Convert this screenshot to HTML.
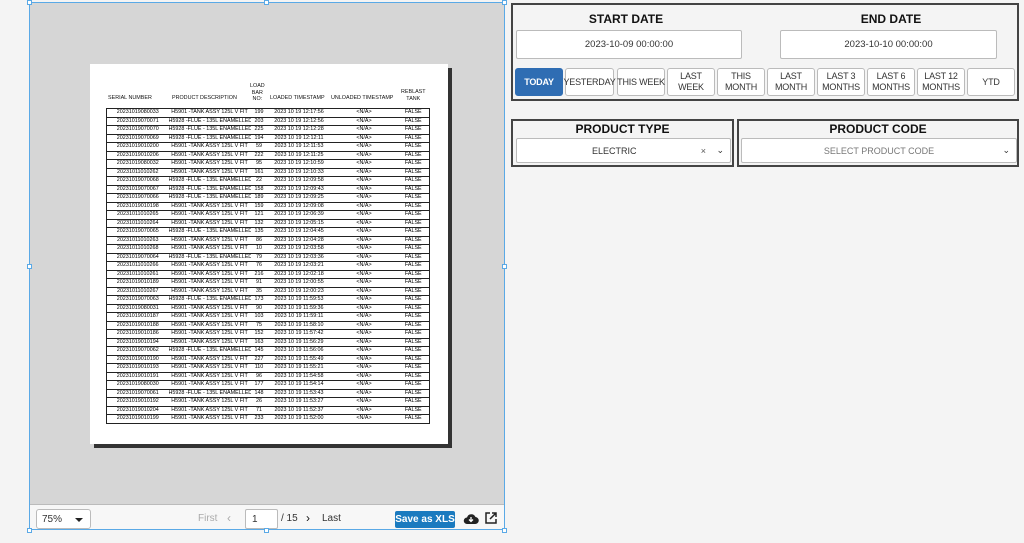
<!DOCTYPE html>
<html><head><meta charset="utf-8"><style>
*{box-sizing:border-box;margin:0;padding:0}
body{width:1024px;height:543px;background:#f4f4f4;font-family:"Liberation Sans",sans-serif;position:relative;overflow:hidden}
.viewer{position:absolute;left:29px;top:2px;width:476px;height:528px;border:1px solid #5aa9e6;background:#f7f7f7}
.gray{position:absolute;left:0;top:0;width:474px;height:502px;background:#d6d6d6;border-bottom:1px solid #bbb}
.page{position:absolute;left:60px;top:61px;width:358px;height:380px;background:#fff;box-shadow:4px 4px 0 #333}
.h{position:absolute;font-size:5.4px;color:#111;text-align:center;line-height:6.5px}
table{position:absolute;left:16px;top:44px;width:323px;border-collapse:collapse;font-size:5.4px;color:#000;table-layout:fixed}
td{border:0.8px solid #222;height:8.5px;line-height:7px;padding:0;white-space:nowrap;overflow:hidden;text-align:center;border-left:none;border-right:none}
tr td:first-child{border-left:0.8px solid #222}
tr td:last-child{border-right:0.8px solid #222}
.hd{position:absolute;width:5px;height:5px;border:1px solid #5aa9e6;background:#fff}
.tb{position:absolute;top:503px;left:0;width:474px;height:24px;font-size:10px;color:#333}
.box{position:absolute;border:2px solid #444;background:#f4f4f4}
.lbl{position:absolute;font-weight:bold;font-size:12px;color:#111;text-align:center}
.inp{position:absolute;background:#fff;border:1px solid #bbb;font-size:9.5px;color:#333;text-align:center;border-radius:2px}
.btn{position:absolute;top:68px;height:28px;width:48px;border:1px solid #bbb;border-radius:3px;background:#fff;font-size:9px;color:#333;text-align:center;display:flex;align-items:center;justify-content:center;line-height:11px;white-space:nowrap;letter-spacing:-0.2px}
</style></head><body>
<div class="viewer">
 <div class="gray">
  <div class="page">
   <div class="h" style="left:18px;top:31px">SERIAL NUMBER</div>
   <div class="h" style="left:82px;top:31px">PRODUCT DESCRIPTION</div>
   <div class="h" style="left:160px;top:19px">LOAD<br>BAR<br>NO:</div>
   <div class="h" style="left:180px;top:31px">LOADED TIMESTAMP</div>
   <div class="h" style="left:241px;top:31px">UNLOADED TIMESTAMP</div>
   <div class="h" style="left:311px;top:25px">REBLAST<br>TANK</div>
   <table>
<colgroup><col style="width:62px"><col style="width:82px"><col style="width:17px"><col style="width:63px"><col style="width:67px"><col style="width:32px"></colgroup>
<tr><td>20231019080033</td><td>H5901 -TANK ASSY 125L V FIT</td><td>199</td><td>2023 10 19 12:17:56</td><td>&lt;N/A&gt;</td><td>FALSE</td></tr>
<tr><td>20231019070071</td><td>H5928 -FLUE - 135L ENAMELLED</td><td>203</td><td>2023 10 19 12:12:56</td><td>&lt;N/A&gt;</td><td>FALSE</td></tr>
<tr><td>20231019070070</td><td>H5928 -FLUE - 135L ENAMELLED</td><td>225</td><td>2023 10 19 12:12:28</td><td>&lt;N/A&gt;</td><td>FALSE</td></tr>
<tr><td>20231019070069</td><td>H5928 -FLUE - 135L ENAMELLED</td><td>194</td><td>2023 10 19 12:12:11</td><td>&lt;N/A&gt;</td><td>FALSE</td></tr>
<tr><td>20231019010200</td><td>H5901 -TANK ASSY 125L V FIT</td><td>59</td><td>2023 10 19 12:11:53</td><td>&lt;N/A&gt;</td><td>FALSE</td></tr>
<tr><td>20231019010206</td><td>H5901 -TANK ASSY 125L V FIT</td><td>222</td><td>2023 10 19 12:11:25</td><td>&lt;N/A&gt;</td><td>FALSE</td></tr>
<tr><td>20231019080032</td><td>H5901 -TANK ASSY 125L V FIT</td><td>95</td><td>2023 10 19 12:10:59</td><td>&lt;N/A&gt;</td><td>FALSE</td></tr>
<tr><td>20231011010262</td><td>H5901 -TANK ASSY 125L V FIT</td><td>161</td><td>2023 10 19 12:10:33</td><td>&lt;N/A&gt;</td><td>FALSE</td></tr>
<tr><td>20231019070068</td><td>H5928 -FLUE - 135L ENAMELLED</td><td>22</td><td>2023 10 19 12:09:58</td><td>&lt;N/A&gt;</td><td>FALSE</td></tr>
<tr><td>20231019070067</td><td>H5928 -FLUE - 135L ENAMELLED</td><td>158</td><td>2023 10 19 12:09:43</td><td>&lt;N/A&gt;</td><td>FALSE</td></tr>
<tr><td>20231019070066</td><td>H5928 -FLUE - 135L ENAMELLED</td><td>189</td><td>2023 10 19 12:09:25</td><td>&lt;N/A&gt;</td><td>FALSE</td></tr>
<tr><td>20231019010198</td><td>H5901 -TANK ASSY 125L V FIT</td><td>159</td><td>2023 10 19 12:09:08</td><td>&lt;N/A&gt;</td><td>FALSE</td></tr>
<tr><td>20231011010265</td><td>H5901 -TANK ASSY 125L V FIT</td><td>121</td><td>2023 10 19 12:06:39</td><td>&lt;N/A&gt;</td><td>FALSE</td></tr>
<tr><td>20231011010264</td><td>H5901 -TANK ASSY 125L V FIT</td><td>132</td><td>2023 10 19 12:05:15</td><td>&lt;N/A&gt;</td><td>FALSE</td></tr>
<tr><td>20231019070065</td><td>H5928 -FLUE - 135L ENAMELLED</td><td>135</td><td>2023 10 19 12:04:45</td><td>&lt;N/A&gt;</td><td>FALSE</td></tr>
<tr><td>20231011010263</td><td>H5901 -TANK ASSY 125L V FIT</td><td>86</td><td>2023 10 19 12:04:28</td><td>&lt;N/A&gt;</td><td>FALSE</td></tr>
<tr><td>20231011010268</td><td>H5901 -TANK ASSY 125L V FIT</td><td>10</td><td>2023 10 19 12:03:58</td><td>&lt;N/A&gt;</td><td>FALSE</td></tr>
<tr><td>20231019070064</td><td>H5928 -FLUE - 135L ENAMELLED</td><td>79</td><td>2023 10 19 12:03:36</td><td>&lt;N/A&gt;</td><td>FALSE</td></tr>
<tr><td>20231011010266</td><td>H5901 -TANK ASSY 125L V FIT</td><td>76</td><td>2023 10 19 12:03:21</td><td>&lt;N/A&gt;</td><td>FALSE</td></tr>
<tr><td>20231011010261</td><td>H5901 -TANK ASSY 125L V FIT</td><td>216</td><td>2023 10 19 12:02:18</td><td>&lt;N/A&gt;</td><td>FALSE</td></tr>
<tr><td>20231019010189</td><td>H5901 -TANK ASSY 125L V FIT</td><td>91</td><td>2023 10 19 12:00:55</td><td>&lt;N/A&gt;</td><td>FALSE</td></tr>
<tr><td>20231011010267</td><td>H5901 -TANK ASSY 125L V FIT</td><td>35</td><td>2023 10 19 12:00:23</td><td>&lt;N/A&gt;</td><td>FALSE</td></tr>
<tr><td>20231019070063</td><td>H5928 -FLUE - 135L ENAMELLED</td><td>173</td><td>2023 10 19 11:59:53</td><td>&lt;N/A&gt;</td><td>FALSE</td></tr>
<tr><td>20231019080031</td><td>H5901 -TANK ASSY 125L V FIT</td><td>90</td><td>2023 10 19 11:59:36</td><td>&lt;N/A&gt;</td><td>FALSE</td></tr>
<tr><td>20231019010187</td><td>H5901 -TANK ASSY 125L V FIT</td><td>103</td><td>2023 10 19 11:59:11</td><td>&lt;N/A&gt;</td><td>FALSE</td></tr>
<tr><td>20231019010188</td><td>H5901 -TANK ASSY 125L V FIT</td><td>75</td><td>2023 10 19 11:58:10</td><td>&lt;N/A&gt;</td><td>FALSE</td></tr>
<tr><td>20231019010186</td><td>H5901 -TANK ASSY 125L V FIT</td><td>152</td><td>2023 10 19 11:57:42</td><td>&lt;N/A&gt;</td><td>FALSE</td></tr>
<tr><td>20231019010194</td><td>H5901 -TANK ASSY 125L V FIT</td><td>163</td><td>2023 10 19 11:56:29</td><td>&lt;N/A&gt;</td><td>FALSE</td></tr>
<tr><td>20231019070062</td><td>H5928 -FLUE - 135L ENAMELLED</td><td>145</td><td>2023 10 19 11:56:06</td><td>&lt;N/A&gt;</td><td>FALSE</td></tr>
<tr><td>20231019010190</td><td>H5901 -TANK ASSY 125L V FIT</td><td>227</td><td>2023 10 19 11:55:49</td><td>&lt;N/A&gt;</td><td>FALSE</td></tr>
<tr><td>20231019010193</td><td>H5901 -TANK ASSY 125L V FIT</td><td>110</td><td>2023 10 19 11:55:21</td><td>&lt;N/A&gt;</td><td>FALSE</td></tr>
<tr><td>20231019010191</td><td>H5901 -TANK ASSY 125L V FIT</td><td>96</td><td>2023 10 19 11:54:58</td><td>&lt;N/A&gt;</td><td>FALSE</td></tr>
<tr><td>20231019080030</td><td>H5901 -TANK ASSY 125L V FIT</td><td>177</td><td>2023 10 19 11:54:14</td><td>&lt;N/A&gt;</td><td>FALSE</td></tr>
<tr><td>20231019070061</td><td>H5928 -FLUE - 135L ENAMELLED</td><td>148</td><td>2023 10 19 11:53:43</td><td>&lt;N/A&gt;</td><td>FALSE</td></tr>
<tr><td>20231019010192</td><td>H5901 -TANK ASSY 125L V FIT</td><td>26</td><td>2023 10 19 11:53:27</td><td>&lt;N/A&gt;</td><td>FALSE</td></tr>
<tr><td>20231019010204</td><td>H5901 -TANK ASSY 125L V FIT</td><td>71</td><td>2023 10 19 11:52:37</td><td>&lt;N/A&gt;</td><td>FALSE</td></tr>
<tr><td>20231019010199</td><td>H5901 -TANK ASSY 125L V FIT</td><td>233</td><td>2023 10 19 11:52:00</td><td>&lt;N/A&gt;</td><td>FALSE</td></tr>
   </table>
  </div>
 </div>
 <div class="tb">
  <div style="position:absolute;left:6px;top:3px;width:55px;height:20px;border:1px solid #bbb;border-radius:3px;background:#fff;padding:4px 5px;font-size:10px">75%<span style="position:absolute;right:7px;top:8px;border:4px solid transparent;border-top:4px solid #222"></span></div>
  <div style="position:absolute;left:168px;top:7px;color:#aaa">First</div>
  <div style="position:absolute;left:197px;top:5px;color:#aaa;font-size:12px">‹</div>
  <div style="position:absolute;left:215px;top:3px;width:33px;height:20px;border:1px solid #bbb;border-radius:2px;background:#fff;padding:4px 6px">1</div>
  <div style="position:absolute;left:251px;top:7px">/ 15</div>
  <div style="position:absolute;left:276px;top:5px;font-size:12px;color:#111">›</div>
  <div style="position:absolute;left:292px;top:7px">Last</div>
  <div style="position:absolute;left:365px;top:5px;width:60px;height:17px;background:#1a7abf;color:#fff;font-weight:bold;font-size:10px;text-align:center;line-height:17px;border-radius:2px">Save as XLS</div>
  <svg style="position:absolute;left:433px;top:7px" width="16" height="12" viewBox="0 0 16 12"><path d="M4 11h8a3.5 3.5 0 0 0 .5-7A4.5 4.5 0 0 0 4 4.5 3.2 3.2 0 0 0 4 11z" fill="#222"/><path d="M8 4v4M6 6.5l2 2 2-2" stroke="#fff" stroke-width="1.3" fill="none"/></svg>
  <svg style="position:absolute;left:455px;top:6px" width="12" height="12" viewBox="0 0 12 12"><path d="M5 1H1v10h10V7" stroke="#222" stroke-width="1.5" fill="none"/><path d="M7 1h4v4M11 1 5 7" stroke="#222" stroke-width="1.5" fill="none"/></svg>
 </div>
</div>
<div class="hd" style="left:27px;top:0px"></div><div class="hd" style="left:264px;top:0px"></div><div class="hd" style="left:502px;top:0px"></div>
<div class="hd" style="left:27px;top:264px"></div><div class="hd" style="left:502px;top:264px"></div>
<div class="hd" style="left:27px;top:528px"></div><div class="hd" style="left:264px;top:528px"></div><div class="hd" style="left:502px;top:528px"></div>

<div class="box" style="left:511px;top:3px;width:508px;height:98px">
 <div class="lbl" style="left:2px;top:7px;width:222px">START DATE</div>
 <div class="lbl" style="left:268px;top:7px;width:220px">END DATE</div>
 <div class="inp" style="left:3px;top:25px;width:226px;height:29px;line-height:28px">2023-10-09 00:00:00</div>
 <div class="inp" style="left:267px;top:25px;width:217px;height:29px;line-height:28px">2023-10-10 00:00:00</div>
</div>
<div class="btn" style="left:515px;background:#2f6db3;color:#fff;font-weight:bold;border-color:#2f6db3">TODAY</div>
<div class="btn" style="left:565px;width:49px">YESTERDAY</div>
<div class="btn" style="left:617px">THIS WEEK</div>
<div class="btn" style="left:667px">LAST<br>WEEK</div>
<div class="btn" style="left:717px">THIS<br>MONTH</div>
<div class="btn" style="left:767px">LAST<br>MONTH</div>
<div class="btn" style="left:817px">LAST 3<br>MONTHS</div>
<div class="btn" style="left:867px">LAST 6<br>MONTHS</div>
<div class="btn" style="left:917px">LAST 12<br>MONTHS</div>
<div class="btn" style="left:967px">YTD</div>

<div class="box" style="left:511px;top:119px;width:223px;height:48px">
 <div class="lbl" style="left:0;top:1px;width:219px">PRODUCT TYPE</div>
 <div class="inp" style="left:3px;top:17px;width:215px;height:25px;line-height:24px;font-size:9px;text-align:left;padding-left:75px">ELECTRIC<span style="position:absolute;right:24px;color:#555">×</span><span style="position:absolute;right:6px;top:-1px;color:#333">⌄</span></div>
</div>
<div class="box" style="left:737px;top:119px;width:282px;height:48px">
 <div class="lbl" style="left:0;top:1px;width:278px">PRODUCT CODE</div>
 <div class="inp" style="left:2px;top:17px;width:276px;height:25px;line-height:24px;font-size:9px;color:#777">SELECT PRODUCT CODE<span style="position:absolute;right:6px;top:-1px;color:#333">⌄</span></div>
</div>
</body></html>
